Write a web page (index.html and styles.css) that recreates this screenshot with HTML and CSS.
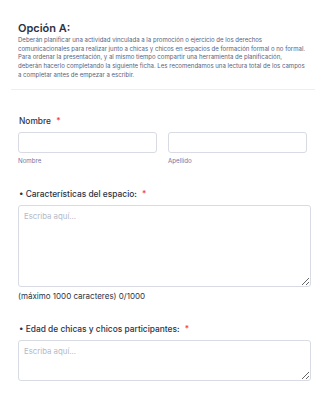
FILE: index.html
```html
<!DOCTYPE html>
<html lang="es">
<head>
  <meta charset="UTF-8">
  <meta name="viewport" content="width=device-width, initial-scale=1.0">
  <title>Opción A</title>
  <link rel="stylesheet" href="styles.css">
</head>
<body>
  <form class="form">
    <!-- Header -->
    <div class="form-header">
      <h2 class="form-title">Opción A:</h2>
      <p class="form-desc">Deberán planificar una actividad vinculada a la promoción o ejercicio de los derechos<br>comunicacionales para realizar junto a chicas y chicos en espacios de formación formal o no formal.<br>Para ordenar la presentación, y al mismo tiempo compartir una herramienta de planificación,<br>deberán hacerlo completando la siguiente ficha. Les recomendamos una lectura total de los campos<br>a completar antes de empezar a escribir.</p>
    </div>

    <!-- Nombre -->
    <div class="field field-name">
      <label class="field-label">Nombre <span class="req">*</span></label>
      <div class="name-row">
        <div class="name-col">
          <input type="text" class="text-input">
          <span class="sublabel">Nombre</span>
        </div>
        <div class="name-col">
          <input type="text" class="text-input">
          <span class="sublabel">Apellido</span>
        </div>
      </div>
    </div>

    <!-- Características -->
    <div class="field field-caract">
      <label class="field-label">• Características del espacio: <span class="req">*</span></label>
      <textarea class="text-area tall" placeholder="Escriba aquí..."></textarea>
      <div class="counter">(máximo 1000 caracteres) 0/1000</div>
    </div>

    <!-- Edad -->
    <div class="field field-edad">
      <label class="field-label">• Edad de chicas y chicos participantes: <span class="req">*</span></label>
      <textarea class="text-area short" placeholder="Escriba aquí..."></textarea>
    </div>
  </form>
</body>
</html>
```

FILE: styles.css
```css
/* General */
body {
  margin: 0;
  background: #ffffff;
  font-family: 'Inter', 'Noto Sans', sans-serif;
  color: #2c3345;
}

.form {
  padding-top: 22px;
}

/* Header */
.form-header {
  margin: 0 10px 0 11px;
  padding: 0 0 9px 7px;
  border-bottom: 1px solid #eceef3;
}

.form-title {
  margin: 0 0 1px;
  font-size: 11px;
  line-height: 13px;
  font-weight: 600;
  color: #2c3345;
}

.form-desc {
  margin: 0;
  font-size: 6.05px;
  line-height: 8.7px;
  color: #57647e;
  white-space: nowrap;
}

/* Fields */
.field {
  padding: 0 14px 0 18px;
}

.field-name {
  margin-top: 26px;
}

.field-caract {
  margin-top: 24px;
}

.field-edad {
  margin-top: 23px;
}

.field-label {
  display: block;
  font-size: 8.4px;
  line-height: 10px;
  font-weight: 500;
  color: #2c3345;
  margin-bottom: 6px;
  padding-left: 1px;
}

.req {
  color: #f23a3c;
  margin-left: 3px;
}

.name-row {
  display: flex;
  gap: 11px;
  width: 289px;
}

.name-col {
  flex: 1;
  display: flex;
  flex-direction: column;
}

.text-input {
  box-sizing: border-box;
  height: 21px;
  width: 100%;
  border: 1px solid #d8dbe4;
  border-radius: 3px;
  background: #fff;
  margin: 0;
}

.sublabel {
  margin-top: 4px;
  font-size: 6.2px;
  line-height: 8px;
  color: #6f76a7;
}

.text-area {
  display: block;
  box-sizing: border-box;
  width: 293px;
  margin: 0;
  padding: 5px 5px;
  border: 1px solid #d8dbe4;
  border-radius: 3px;
  font-family: 'Inter', 'Noto Sans', sans-serif;
  font-size: 7.8px;
  line-height: 10px;
  color: #2c3345;
  resize: vertical;
}

.text-area::placeholder {
  color: #b4b9c8;
}

.text-area.tall {
  height: 82px;
}

.text-area.short {
  height: 41px;
}

.counter {
  margin-top: 4px;
  font-size: 8px;
  line-height: 10px;
  color: #2c3345;
}
```
